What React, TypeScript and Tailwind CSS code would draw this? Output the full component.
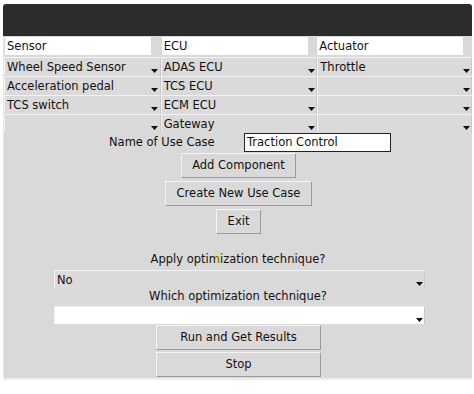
import React from "react";

const font = { fontFamily: '"DejaVu Sans", Verdana, sans-serif' };

function Arrow() {
  return (
    <div className="flex h-full w-[10px] shrink-0 items-end justify-center pb-[2px]">
      <svg width="7" height="5" viewBox="0 0 7 5">
        <polygon points="0,1 7,1 3.5,5" fill="#111" />
      </svg>
    </div>
  );
}

function Combo({ text = "", white = false, w }: { text?: string; white?: boolean; w: string }) {
  return (
    <div
      className={`flex h-[18px] items-center border-t border-l border-[#f2f2f2] border-r border-r-[#c8c8c8] ${w} ${
        white ? "bg-white" : "bg-[#dadada]"
      }`}
    >
      <div className="flex-1 truncate pl-[2px] leading-[16px] text-[#111]">{text}</div>
      <Arrow />
    </div>
  );
}

function Entry({ text, w, cls = "" }: { text: string; w: string; cls?: string }) {
  return (
    <div className={`flex h-[18px] items-center bg-white pl-[2px] leading-[16px] text-[#111] ${w} ${cls}`}>
      {text}
    </div>
  );
}

function Btn({ label, w }: { label: string; w: string }) {
  return (
    <div
      className={`flex h-[25px] items-center justify-center border border-t-[#f4f4f4] border-l-[#f4f4f4] border-r-[#9a9a9a] border-b-[#9a9a9a] bg-[#d9d9d9] text-[#111] ${w}`}
    >
      {label}
    </div>
  );
}

export default function App() {
  const rows = [
    ["Wheel Speed Sensor", "ADAS ECU", "Throttle"],
    ["Acceleration pedal", "TCS ECU", ""],
    ["TCS switch", "ECM ECU", ""],
    ["", "Gateway", ""],
  ];
  return (
    <div className="h-[394px] w-[474px] bg-white text-[11.5px]" style={font}>
      <div className="ml-[3px] pt-[4px] w-[469px]">
        <div className="h-[32px] rounded-t-[3px] bg-[#2c2c2c]" />
        <div className="relative flex h-[342px] flex-col bg-[#d9d9d9] border-l border-[#e6e6e6]">
          <div className="mt-[1px] flex h-[19px]">
            <div className="w-[157px]"><Entry text="Sensor" w="w-[146px]" cls="ml-[1px]" /></div>
            <div className="w-[157px]"><Entry text="ECU" w="w-[146px]" cls="ml-[1px]" /></div>
            <div className="w-[155px]"><Entry text="Actuator" w="w-[146px]" /></div>
          </div>
          {rows.map((r, i) => (
            <div key={i} className="flex h-[19px] items-end">
              <Combo text={r[0]} w="w-[157px]" />
              <Combo text={r[1]} w="w-[157px]" />
              <Combo text={r[2]} w="w-[155px]" />
            </div>
          ))}
          <div className="flex h-[21px] items-center">
            <div className="ml-[105px] w-[135px] text-[#111]">Name of Use Case</div>
            <div className="flex h-[19px] w-[147px] items-center border border-[#222] bg-white pl-[2px] text-[#111]">
              Traction Control
            </div>
          </div>
          <div className="flex flex-col items-center gap-[3px] pl-[1px]">
            <Btn label="Add Component" w="w-[115px]" />
            <Btn label="Create New Use Case" w="w-[147px]" />
            <Btn label="Exit" w="w-[45px]" />
          </div>
          <div className="mt-[17px] flex h-[18px] items-center justify-center text-[#111]">
            Apply optimization technique?
          </div>
          <div className="ml-[50px] mt-[1px]">
            <Combo text="No" w="w-[371px]" />
          </div>
          <div className="flex h-[18px] items-center justify-center text-[#111]">
            Which optimization technique?
          </div>
          <div className="ml-[50px]">
            <Combo white w="w-[371px]" />
          </div>
          <div className="mt-[1px] flex flex-col items-center gap-[2px] pl-[1px]">
            <Btn label="Run and Get Results" w="w-[165px]" />
            <Btn label="Stop" w="w-[165px]" />
          </div>
          <div className="pointer-events-none absolute left-[211px] top-[215px] h-[12px] w-[4px] bg-[#f0e000] opacity-40" />
        </div>
        <div className="h-[2px] bg-[#ececec]" />
      </div>
    </div>
  );
}
